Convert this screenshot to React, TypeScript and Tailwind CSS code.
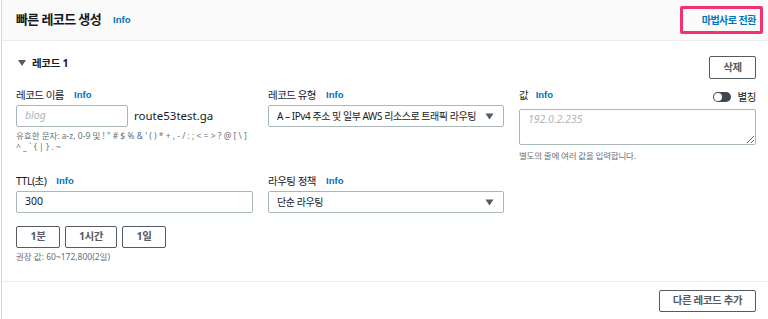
import React from "react";

const font = { fontFamily: '"Noto Sans", "Noto Sans CJK KR", sans-serif' };
const infoFont = { fontFamily: '"Liberation Sans", Arial, sans-serif' };

function Info({ className = "ml-[10px]" }: { className?: string }) {
  return (
    <span
      className={"text-[9.5px] font-bold leading-[14px] tracking-normal text-[#0073bb] " + className}
      style={infoFont}
    >
      Info
    </span>
  );
}

function Label({ children }: { children: React.ReactNode }) {
  return (
    <div className="flex h-[17px] items-start text-[10.5px] leading-[14px] text-[#16191f]">
      <span className="tracking-[-0.5px]">{children}</span>
      <Info />
    </div>
  );
}

function Caret() {
  return (
    <svg width="9" height="7" viewBox="0 0 9 7" className="shrink-0">
      <path d="M0.5 0.5 L8.5 0.5 L4.5 6.5 Z" fill="#545b64" />
    </svg>
  );
}

function Select({ text }: { text: string }) {
  return (
    <div className="flex h-[22px] w-full items-center justify-between rounded-[2px] border border-[#aab7b8] bg-white pl-[8px] pr-[9px] text-[10px] tracking-[-0.45px] text-[#16191f]">
      <span className="whitespace-nowrap">{text}</span>
      <Caret />
    </div>
  );
}

function Btn({ children, className = "" }: { children: React.ReactNode; className?: string }) {
  return (
    <div
      className={
        "flex h-[22px] items-center justify-center rounded-[2px] border border-[#545b64] bg-white text-[10.5px] font-bold tracking-[-0.4px] text-[#545b64] " +
        className
      }
    >
      {children}
    </div>
  );
}

export default function App() {
  return (
    <div className="h-[319px] w-[768px] overflow-hidden bg-white" style={font}>
      <div className="ml-[1px] flex h-[319px] flex-col border-l border-[#d5dbdb]">
        {/* header */}
        <div className="flex h-[41px] shrink-0 items-center justify-between border-b border-[#eaeded] bg-[#fafafa] pl-[14px] pr-[5px]">
          <div className="flex items-center">
            <span className="text-[13px] font-bold tracking-[-0.6px] text-[#16191f]">빠른 레코드 생성</span>
            <Info className="ml-[12px]" />
          </div>
          <div className="flex h-[28px] w-[83px] items-center justify-end rounded-[2px] border-[3px] border-[#f4306e] pr-[4px] text-[10px] font-bold tracking-[-0.5px] text-[#0073bb]">
            마법사로 전환
          </div>
        </div>

        {/* record section */}
        <div className="flex h-[241px] shrink-0 flex-col border-b border-[#eaeded] pl-[14px] pr-[12px]">
          <div className="mt-[15px] flex h-[23px] items-start justify-between">
            <div className="flex items-center text-[10.5px] font-bold leading-[14px] tracking-[-0.3px] text-[#16191f]">
              <svg width="8" height="6" viewBox="0 0 8 6" className="mr-[6px] ml-[2px]">
                <path d="M0 0 L8 0 L4 6 Z" fill="#545b64" />
              </svg>
              <span>레코드&nbsp;1</span>
            </div>
            <Btn className="h-[23px] w-[47px]">삭제</Btn>
          </div>

          <div className="mt-[9px] grid h-[86px] grid-cols-[237px_236px_237px] gap-x-[15px]">
            {/* name */}
            <div className="flex flex-col">
              <Label>레코드 이름</Label>
              <div className="flex items-center">
                <div className="flex h-[22px] w-[112px] items-center rounded-[2px] border border-[#aab7b8] pl-[8px] text-[10.5px] italic text-[#aab7b8]">
                  blog
                </div>
                <span className="ml-[6px] text-[11.5px] text-[#16191f]">route53test.ga</span>
              </div>
              <div className="mt-[3px] text-[8.5px] leading-[11px] text-[#687078]">
                유효한 문자: a-z, 0-9 및 ! " # $ % &amp; ' ( ) * + , - / : ; &lt; = &gt; ? @ [ \ ]
                <br />^ _ ` {"{"} | {"}"} . ~
              </div>
            </div>
            {/* type */}
            <div className="flex flex-col">
              <Label>레코드 유형</Label>
              <Select text="A – IPv4 주소 및 일부 AWS 리소스로 트래픽 라우팅" />
            </div>
            {/* value */}
            <div className="flex flex-col">
              <div className="flex h-[21px] items-start justify-between">
                <div className="flex items-start text-[10.5px] leading-[14px] text-[#16191f]">
                  <span>값</span>
                  <Info className="ml-[7px]" />
                </div>
                <div className="flex items-center pt-[2px]">
                  <div className="relative h-[10px] w-[18px] rounded-full bg-[#414750]">
                    <div className="absolute left-[1px] top-[1px] h-[8px] w-[8px] rounded-full bg-white" />
                  </div>
                  <span className="ml-[6px] text-[10.5px] leading-[14px] tracking-[-0.4px] text-[#16191f]">별칭</span>
                </div>
              </div>
              <textarea
                className="h-[36px] w-full rounded-[2px] border border-[#aab7b8] px-[8px] py-[2px] text-[10.5px] italic text-[#16191f] outline-none placeholder:text-[#aab7b8]"
                placeholder="192.0.2.235"
              />
              <div className="mt-[5px] text-[8.5px] leading-[11px] tracking-[-0.2px] text-[#687078]">
                별도의 줄에 여러 값을 입력합니다.
              </div>
            </div>
          </div>

          <div className="grid grid-cols-[237px_236px_237px] gap-x-[15px]">
            <div className="flex flex-col">
              <Label>TTL(초)</Label>
              <div className="flex h-[22px] w-full items-center rounded-[2px] border border-[#aab7b8] pl-[8px] text-[10.5px] text-[#16191f]">
                300
              </div>
            </div>
            <div className="flex flex-col">
              <Label>라우팅 정책</Label>
              <Select text="단순 라우팅" />
            </div>
            <div />
          </div>

          <div className="mt-[13px] flex gap-[5px]">
            <Btn className="w-[44px]">1분</Btn>
            <Btn className="w-[52px]">1시간</Btn>
            <Btn className="w-[44px]">1일</Btn>
          </div>
          <div className="mt-[3px] text-[8.5px] leading-[11px] text-[#687078]">
            권장 값: 60~172,800(2일)
          </div>
        </div>

        {/* footer */}
        <div className="flex justify-end pr-[12px] pt-[8px]">
          <Btn className="w-[97px]">다른 레코드 추가</Btn>
        </div>
      </div>
    </div>
  );
}
